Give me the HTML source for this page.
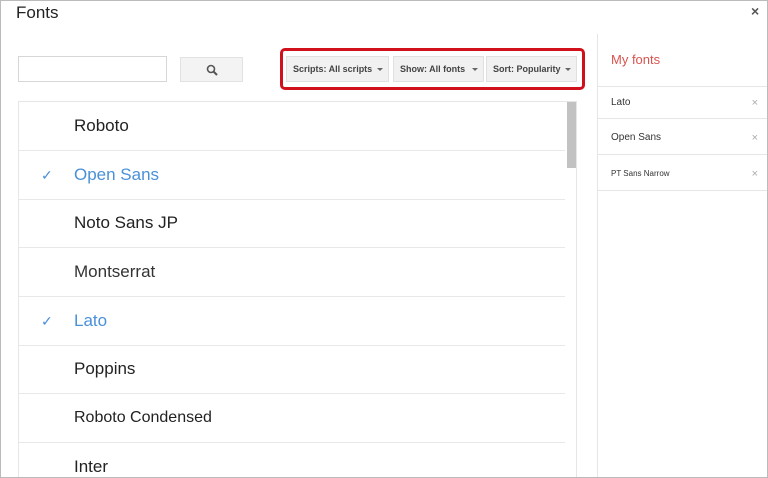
<!DOCTYPE html>
<html><head><style>
*{margin:0;padding:0;box-sizing:border-box}
html,body{width:768px;height:478px;overflow:hidden}
body{background:#fff;font-family:"Liberation Sans",sans-serif;position:relative}
.frame{position:absolute;left:0;top:0;width:768px;height:478px;border:1px solid #bbb;z-index:5;pointer-events:none}
.abs{position:absolute}
.title{left:16px;top:3px;font-size:17px;color:#222}
.close{left:751px;top:3px;font-size:14px;color:#555;font-weight:bold}
.search{left:18px;top:56px;width:149px;height:26px;border:1px solid #d6d6d6}
.sbtn{left:180px;top:57px;width:63px;height:25px;background:#f3f3f3;border:1px solid #e2e2e2}
.hl{left:280px;top:48px;width:305px;height:42px;border:3px solid #d0101a;border-radius:5px}
.btn{top:56px;height:26px;background:#f1f1f1;border:1px solid #e0e0e0;font-size:9px;font-weight:bold;color:#444;line-height:24px;padding-left:6px;white-space:nowrap}
.btn:after{content:"";position:absolute;right:5px;top:11px;border:3px solid transparent;border-top:3px solid #666}
.list{left:18px;top:101px;width:559px;height:377px;border:1px solid #e6e6e6;border-bottom:none;overflow:hidden}
.row{position:absolute;left:0;width:546px;height:49px;border-bottom:1px solid #e8e8e8;font-size:17px;color:#222;padding-left:55px;line-height:48px}
.row.b{color:#4a90d9}
.chk{position:absolute;left:22px;top:0;font-size:14px;color:#4a90d9}
.thumb{left:567px;top:102px;width:9px;height:66px;background:#c2c2c2}
.sep{left:597px;top:34px;width:1px;height:444px;background:#e6e6e6}
.my{left:611px;top:52px;font-size:13px;color:#d9534f}
.mrow{position:absolute;left:598px;width:169px;border-top:1px solid #e6e6e6;font-size:10px;color:#333;padding-left:13px}
.x{position:absolute;right:9px;color:#aaa;font-size:11px}
</style></head><body>
<div class="frame"></div>
<div class="abs title">Fonts</div>
<div class="abs close">×</div>
<div class="abs search"></div>
<div class="abs sbtn"><svg width="63" height="25"><circle cx="30" cy="11" r="3.5" fill="none" stroke="#555" stroke-width="1.6"/><line x1="32.5" y1="13.5" x2="36" y2="17" stroke="#555" stroke-width="2"/></svg></div>
<div class="abs hl"></div>
<div class="abs btn" style="left:286px;width:103px">Scripts: All scripts</div>
<div class="abs btn" style="left:393px;width:91px">Show: All fonts</div>
<div class="abs btn" style="left:486px;width:91px">Sort: Popularity</div>
<div class="abs list">
<div class="row" style="top:0">Roboto</div>
<div class="row b" style="top:49px"><span class="chk">✓</span>Open Sans</div>
<div class="row" style="top:97px">Noto Sans JP</div>
<div class="row" style="top:146px;color:#333">Montserrat</div>
<div class="row b" style="top:195px"><span class="chk">✓</span>Lato</div>
<div class="row" style="top:243px">Poppins</div>
<div class="row" style="top:292px;font-size:16px">Roboto Condensed</div>
<div class="row" style="top:341px">Inter</div>
</div>
<div class="abs thumb"></div>
<div class="abs sep"></div>
<div class="abs my">My fonts</div>
<div class="mrow" style="top:86px;height:33px;line-height:32px">Lato<span class="x">×</span></div>
<div class="mrow" style="top:118px;height:37px;line-height:38px">Open Sans<span class="x">×</span></div>
<div class="mrow" style="top:154px;height:37px;line-height:38px;font-size:8px">PT Sans Narrow<span class="x" style="font-size:11px">×</span></div>
<div class="mrow" style="top:190px;height:1px"></div>
</body></html>
